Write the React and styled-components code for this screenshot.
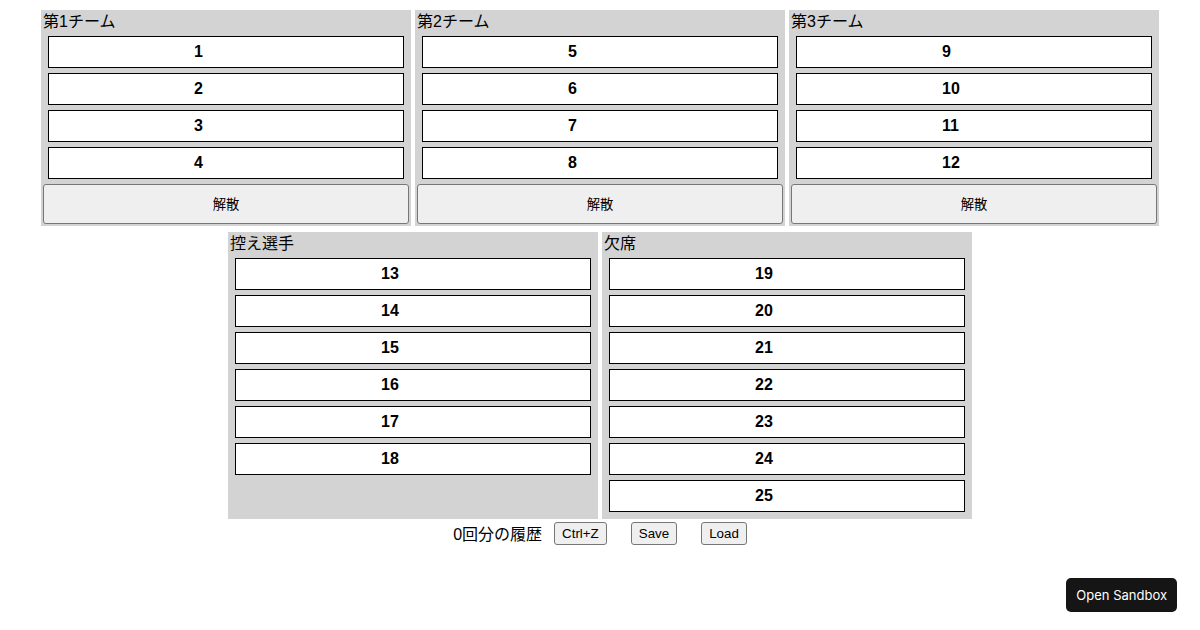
import React from "react";
import styled, { createGlobalStyle } from "styled-components";

const Global = createGlobalStyle`
  body {
    margin: 8px;
    font-family: "Liberation Sans", Arial, "Noto Sans CJK JP", sans-serif;
    color: #000;
    background: #fff;
  }
`;

const Board = styled.div`
  display: flex;
  flex-wrap: wrap;
  justify-content: center;
  align-items: stretch;
  gap: 6px 4px;
  padding-top: 2px;
`;

const Panel = styled.div`
  box-sizing: border-box;
  width: 370px;
  padding: 2px;
  background: #d3d3d3;
`;

const Title = styled.div`
  height: 19px;
  line-height: 19px;
  font-size: 16px;
  white-space: nowrap;
`;

const Member = styled.div`
  box-sizing: border-box;
  height: 32px;
  margin: 5px;
  padding: 0 0 1px 145px;
  border: 1px solid #000;
  background: #fff;
  line-height: 29px;
  text-align: left;
  font-weight: bold;
  font-size: 16px;
`;

const NativeButton = styled.button`
  box-sizing: border-box;
  font-family: "Liberation Sans", Arial, "Noto Sans CJK JP", sans-serif;
  font-size: 13.33px;
  color: #000;
  background: #efefef;
  border: 1px solid #767676;
  border-radius: 3px;
  cursor: pointer;
`;

const PanelButton = styled(NativeButton)`
  display: block;
  width: 100%;
  height: 40px;
  margin-top: 5px;
  padding-bottom: 3px;
`;

const Toolbar = styled.div`
  display: flex;
  justify-content: center;
  align-items: center;
  margin-top: 2px;
  font-size: 16px;
`;

const ToolButton = styled(NativeButton)`
  height: 23px;
  padding: 1px 7px;
  margin-left: ${(p) => (p.$first ? "12px" : "24px")};
`;

const SandboxButton = styled.a`
  position: fixed;
  right: 23px;
  bottom: 18px;
  box-sizing: border-box;
  height: 34px;
  padding: 0 10px;
  display: flex;
  align-items: center;
  background: #151515;
  color: #fff;
  border-radius: 5px;
  font-family: Inter, "Liberation Sans", sans-serif;
  font-size: 13px;
  text-decoration: none;
`;

const teams = [
  { name: "第1チーム", members: [1, 2, 3, 4] },
  { name: "第2チーム", members: [5, 6, 7, 8] },
  { name: "第3チーム", members: [9, 10, 11, 12] },
];

const pools = [
  { name: "控え選手", members: [13, 14, 15, 16, 17, 18] },
  { name: "欠席", members: [19, 20, 21, 22, 23, 24, 25] },
];

export default function App() {
  return (
    <>
      <Global />
      <Board>
        {teams.map((t) => (
          <Panel key={t.name}>
            <Title>{t.name}</Title>
            {t.members.map((m) => (
              <Member key={m}>{m}</Member>
            ))}
            <PanelButton>解散</PanelButton>
          </Panel>
        ))}
        {pools.map((p) => (
          <Panel key={p.name}>
            <Title>{p.name}</Title>
            {p.members.map((m) => (
              <Member key={m}>{m}</Member>
            ))}
          </Panel>
        ))}
      </Board>
      <Toolbar>
        <span>0回分の履歴</span>
        <ToolButton $first>Ctrl+Z</ToolButton>
        <ToolButton>Save</ToolButton>
        <ToolButton>Load</ToolButton>
      </Toolbar>
      <SandboxButton href="#">Open Sandbox</SandboxButton>
    </>
  );
}
